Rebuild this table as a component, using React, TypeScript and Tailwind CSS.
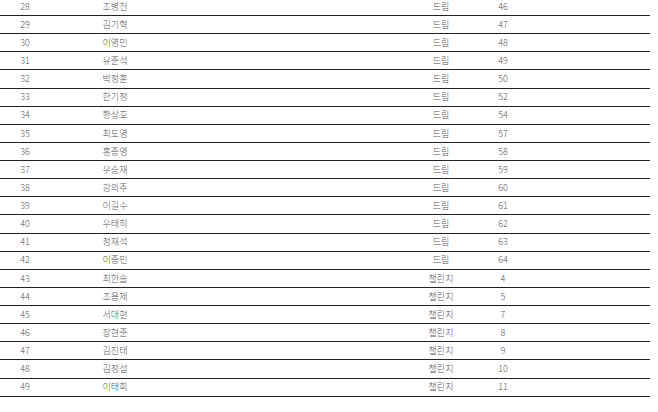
const ROWS: [number, string, string, number][] = [
  [28, "조병천", "드림", 46],
  [29, "김기혁", "드림", 47],
  [30, "이영민", "드림", 48],
  [31, "유준석", "드림", 49],
  [32, "박정훈", "드림", 50],
  [33, "한기정", "드림", 52],
  [34, "황상호", "드림", 54],
  [35, "최도영", "드림", 57],
  [36, "홍종영", "드림", 58],
  [37, "우승재", "드림", 59],
  [38, "강의주", "드림", 60],
  [39, "이길수", "드림", 61],
  [40, "우태히", "드림", 62],
  [41, "정재석", "드림", 63],
  [42, "이종민", "드림", 64],
  [43, "최한솔", "챌린지", 4],
  [44, "조용제", "챌린지", 5],
  [45, "서대현", "챌린지", 7],
  [46, "장현준", "챌린지", 8],
  [47, "김진태", "챌린지", 9],
  [48, "김정섭", "챌린지", 10],
  [49, "이태희", "챌린지", 11],
];

export default function App() {
  return (
    <div className="w-[658px] h-[412px] overflow-hidden bg-white">
      <div
        className="w-[650px] -mt-[2.14px] text-[9px] text-[#555] font-light"
        style={{ fontFamily: '"Noto Sans CJK KR", "Noto Sans", sans-serif' }}
      >
        {ROWS.map(([rank, name, division, no]) => (
          <div key={rank} className="flex items-center h-[18.14px] border-b border-[#222]">
            <div className="w-[50px] text-center">{rank}</div>
            <div className="w-[130px] text-center">{name}</div>
            <div className="w-[230px]" />
            <div className="w-[62px] text-center">{division}</div>
            <div className="w-[62px] text-center">{no}</div>
            <div className="flex-1" />
          </div>
        ))}
      </div>
    </div>
  );
}
